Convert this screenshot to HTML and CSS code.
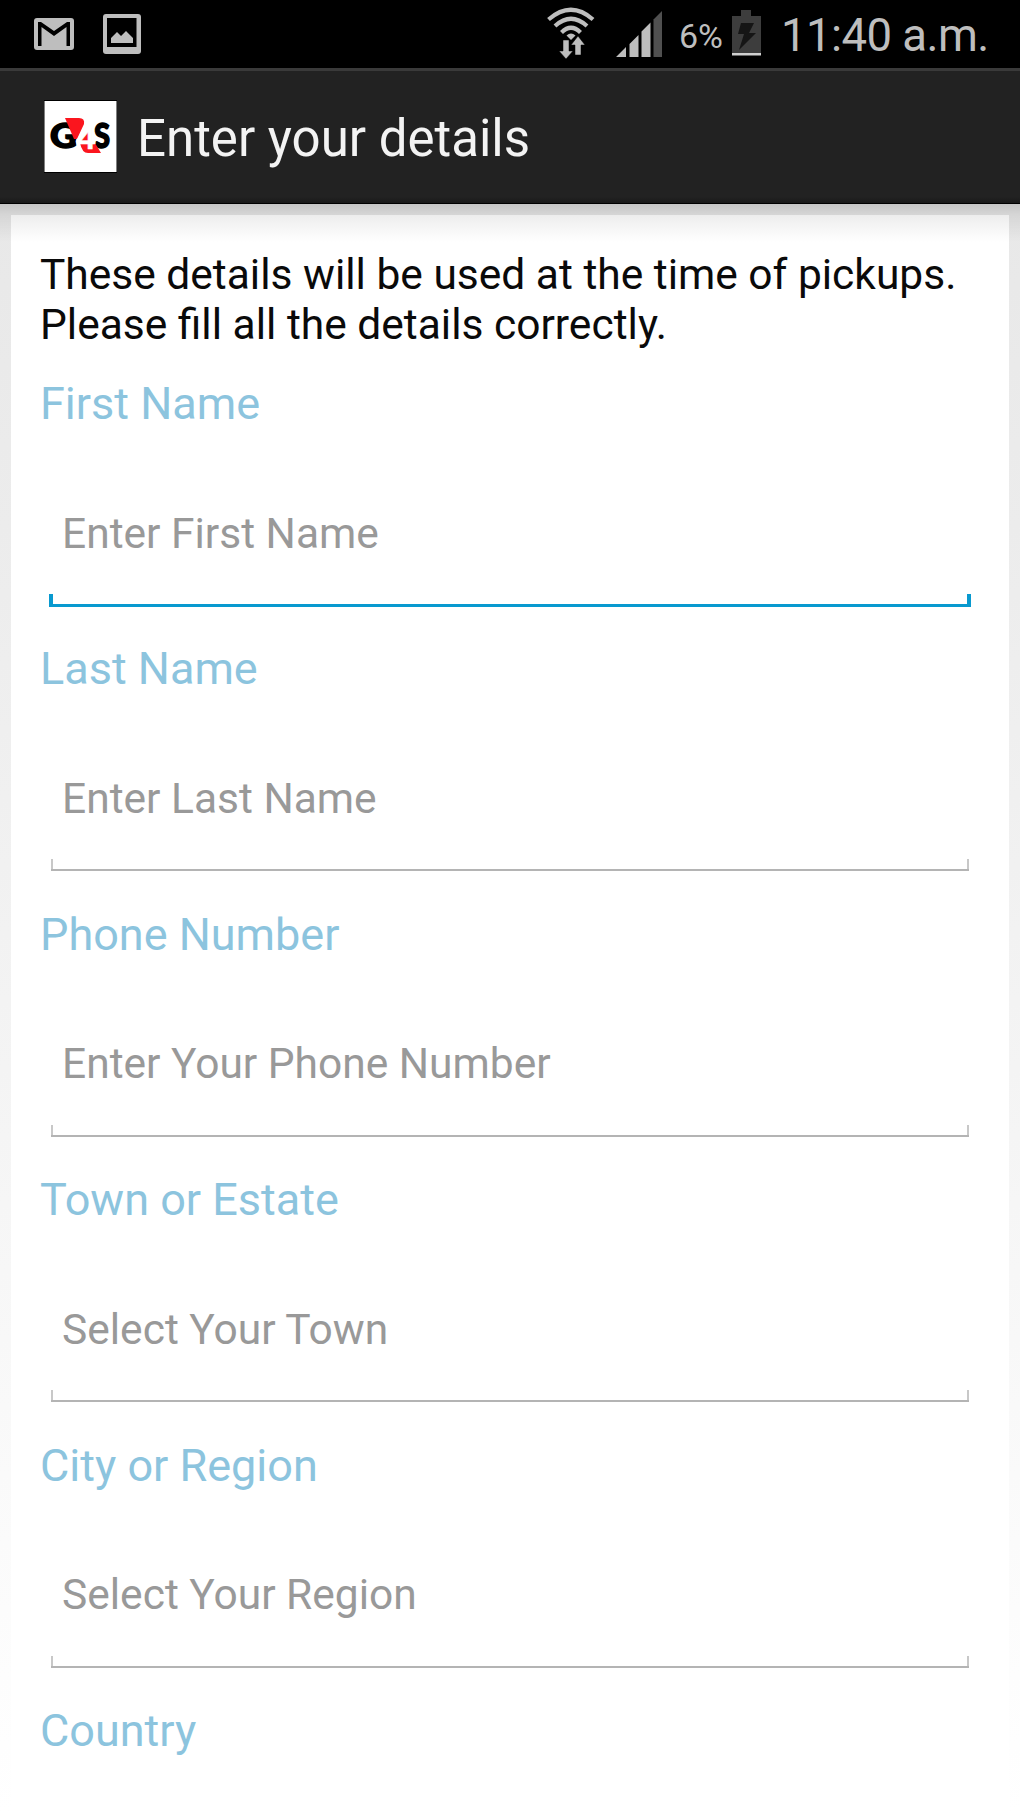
FILE: index.html
```html
<!DOCTYPE html>
<html lang="en">
<head>
    <meta charset="UTF-8">
    <meta name="viewport" content="width=device-width, initial-scale=1.0">
    <title>Enter your details</title>
    <link rel="stylesheet" href="styles.css">
</head>
<body>
    <div class="status-bar">
        <svg class="icon-mail" width="40" height="32" viewBox="0 0 40 32">
            <rect width="40" height="32" rx="3" fill="#bebebe"/>
            <path d="M4 4h3l13 9 13-9h3v24h-3.500V9L20 18 7.500 9v19H4z" fill="#000"/>
        </svg>
        <svg class="icon-picture" width="38" height="40" viewBox="0 0 38 40">
            <rect width="38" height="40" rx="3" fill="#bebebe"/>
            <rect x="4" y="4" width="29.500" height="29" fill="#000"/>
            <path d="M8 29v-5l6-6 4 4 5-5 7 7v5z" fill="#bebebe"/>
        </svg>
        <div class="status-right">
            <svg class="icon-wifi" width="48" height="52" viewBox="0 0 48 52">
                <g fill="none" stroke="#bebebe" stroke-width="4.200">
                    <path d="M1.500 12.500Q24-7 46 12.500"/>
                    <path d="M8 19Q24 4.500 40 19"/>
                    <path d="M14.500 25.500Q24 16 33.500 25.500"/>
                </g>
                <path d="M19.500 28.500q4.500-4 9 0L24 33z" fill="#bebebe"/>
                <path d="M16 33h6v11h4l-7 8-7-8h4zM28 48V38h-4l7-9 7 9h-4v10z" fill="#bebebe" stroke="#000" stroke-width=".5"/>
            </svg>
            <svg class="icon-signal" width="46" height="46" viewBox="0 0 46 46">
                <path d="M0 46l10-10v10zM13.500 46V33l9-9v22zM25.500 46V20.500l9-9V46z" fill="#bebebe"/>
                <path d="M37.500 46V8.500L46 0v46z" fill="#505050"/>
            </svg>
            <span class="percent">6%</span>
            <svg class="icon-battery" width="29" height="46" viewBox="0 0 29 46">
                <path d="M9 0h10v6h10v37H0V6h9z" fill="#3d3d3d"/>
                <path d="M9 13h13l-5 10h7L7 40l5-16H6z" fill="#151515"/>
                <path d="M0 43h29v2.500H0z" fill="#d0d0d0"/>
            </svg>
            <span class="clock">11:40 a.m.</span>
        </div>
    </div>

    <header class="action-bar">
        <svg class="logo" width="73" height="73" viewBox="0 0 73 73">
            <rect width="73" height="73" fill="#000"/>
            <rect x=".5" y="1" width="72" height="71" fill="#fff"/>
            <text class="logo-text" x="6" y="48" textLength="27" lengthAdjust="spacingAndGlyphs">G</text>
            <text class="logo-text" x="50" y="48" textLength="16" lengthAdjust="spacingAndGlyphs">S</text>
            <path d="M21 18h14q6 0 5 6l-7 15h-3z" fill="#fb151e"/>
            <path d="M34 41l10-13h4v13zM36 43h15l6 10H44q-6 0-8-10z" fill="#fb151e"/>
            <text class="logo-four" x="32" y="49" textLength="20" lengthAdjust="spacingAndGlyphs">4</text>
        </svg>
        <h1>Enter your details</h1>
    </header>

    <main>
        <form class="card">
            <p>These details will be used at the time of pickups. Please fill all the details correctly.</p>

            <div class="field active">
                <label for="firstName">First Name</label>
                <input type="text" id="firstName" placeholder="Enter First Name">
            </div>
            <div class="field">
                <label for="lastName">Last Name</label>
                <input type="text" id="lastName" placeholder="Enter Last Name">
            </div>
            <div class="field">
                <label for="phone">Phone Number</label>
                <input type="text" id="phone" placeholder="Enter Your Phone Number">
            </div>
            <div class="field">
                <label for="town">Town or Estate</label>
                <input type="text" id="town" placeholder="Select Your Town">
            </div>
            <div class="field">
                <label for="region">City or Region</label>
                <input type="text" id="region" placeholder="Select Your Region">
            </div>
            <div class="field last">
                <label>Country</label>
            </div>
        </form>
    </main>
</body>
</html>
```
FILE: styles.css
```css
* {
    box-sizing: border-box;
}

body {
    margin: 0;
    height: 1813px;
    font-family: Roboto, "Liberation Sans", sans-serif;
    display: flex;
    flex-direction: column;
}

.status-bar {
    flex: none;
    display: flex;
    align-items: flex-start;
    height: 68px;
    padding-left: 34px;
    background-color: #000;
    color: #bebebe;
}

.icon-mail {
    margin-top: 18px;
}

.icon-picture {
    margin: 14px 0 0 29px;
}

.status-right {
    display: flex;
    align-items: flex-start;
    margin-left: auto;
    padding-right: 32px;
}

.icon-wifi {
    margin-top: 7px;
}

.icon-signal {
    margin: 11px 0 0 21px;
}

.percent {
    margin: 15px 0 0 17px;
    width: 46px;
    font-size: 34px;
    line-height: 42px;
    white-space: nowrap;
}

.icon-battery {
    margin: 10px 0 0 7px;
}

.clock {
    margin: 9px 0 0 20px;
    width: 207px;
    font-size: 45.5px;
    line-height: 54px;
    letter-spacing: -0.55px;
    white-space: nowrap;
}

.action-bar {
    flex: none;
    display: flex;
    align-items: center;
    height: 136px;
    padding-left: 44px;
    border-top: 3px solid #3a3a3a;
    border-bottom: 1px solid #000;
    background: linear-gradient(#222 0, #222 126px, #191919 100%);
}

.logo {
    margin-bottom: 2px;
}

.logo-text,
.logo-four {
    font-family: Lato, Roboto, sans-serif;
    font-weight: 900;
    font-size: 34px;
    stroke: #000;
    stroke-width: 1.5px;
}

.logo-four {
    font-size: 31px;
    fill: #fff;
    stroke: #fff;
    stroke-width: 0.5px;
}

h1 {
    margin: 4px 0 0 20px;
    color: #f3f3f3;
    font-size: 51px;
    line-height: 60px;
    font-weight: 400;
}

main {
    flex: 1;
    padding: 11px 11px 0;
    background:
        linear-gradient(rgba(0, 0, 0, 0.15), rgba(0, 0, 0, 0.08) 11px, transparent 38px),
        linear-gradient(#e8e8e8, #ececec 20%, #fff);
}

.card {
    height: 100%;
    padding: 35px 29px 0;
    background: linear-gradient(#ededed, #fff 27px);
}

.card p {
    margin: 0 0 27px;
    color: #0a0a0a;
    font-size: 42.5px;
    line-height: 50px;
}

.field {
    height: 265.4px;
}

.field.last {
    height: auto;
}

.field label {
    display: block;
    height: 53px;
    color: #8cc4de;
    font-size: 45px;
    line-height: 53px;
}

.field input {
    display: block;
    width: 918px;
    height: 150px;
    margin: 26px 0 0 11px;
    padding: 4px 11px 0;
    border: 0;
    outline: none;
    /* bottom line with short ticks at both ends */
    background:
        linear-gradient(#b4b4b4, #b4b4b4) bottom / 100% 2px no-repeat,
        linear-gradient(#c8c8c8, #c8c8c8) left bottom / 2px 12px no-repeat,
        linear-gradient(#c8c8c8, #c8c8c8) right bottom / 2px 12px no-repeat;
    font-family: inherit;
    font-size: 42.5px;
}

.field input::placeholder {
    color: #999;
    opacity: 1;
}

.active input {
    width: 922px;
    height: 151px;
    margin-left: 9px;
    padding: 3px 13px 0;
    background:
        linear-gradient(#0899cf, #0899cf) bottom / 100% 3px no-repeat,
        linear-gradient(#0899cf, #0899cf) left bottom / 4px 13px no-repeat,
        linear-gradient(#0899cf, #0899cf) right bottom / 4px 13px no-repeat;
}
```
